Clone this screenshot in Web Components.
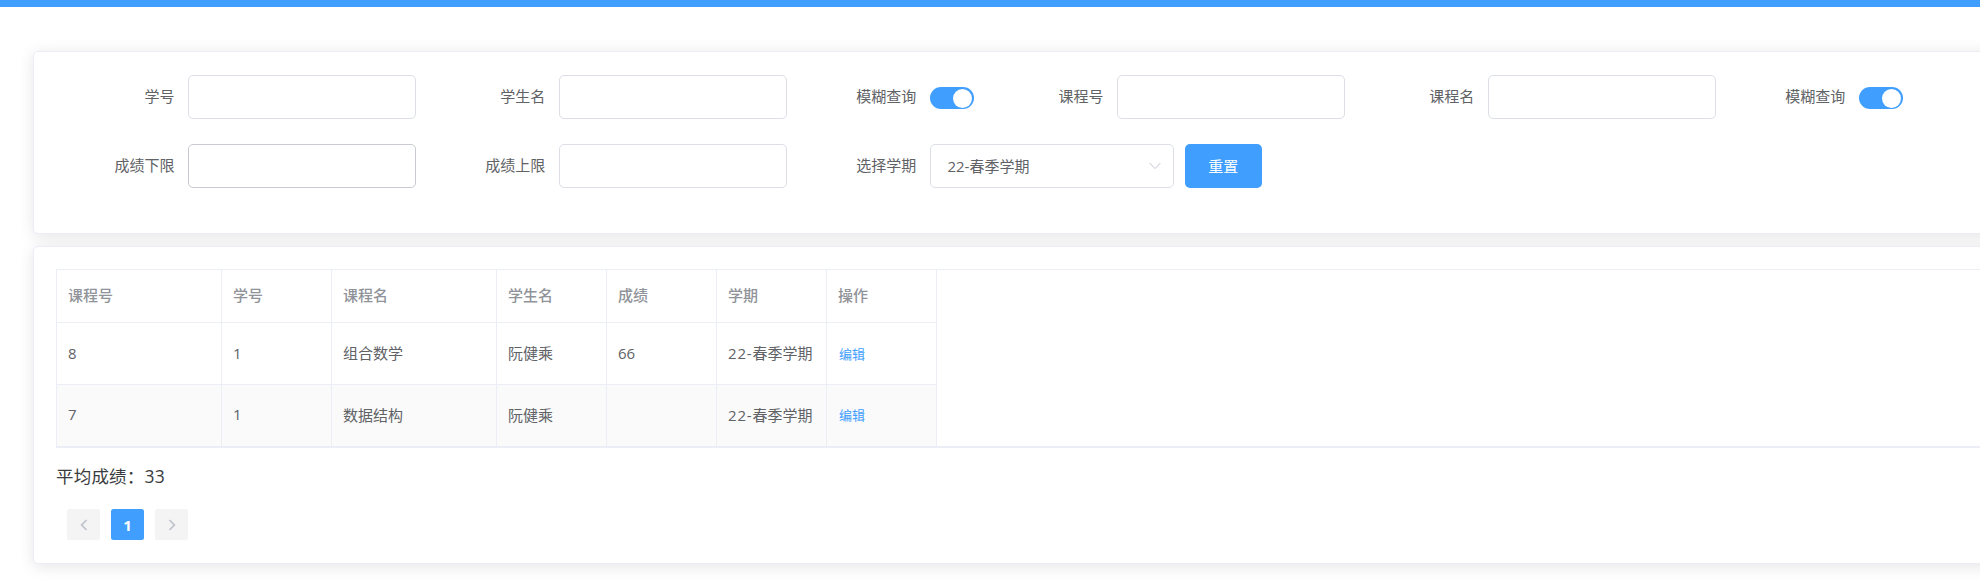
<!DOCTYPE html>
<html lang="zh-CN">
<head>
<meta charset="utf-8">
<title>成绩管理</title>
<style>
html,body{margin:0;padding:0;background:#fff;overflow:hidden;height:100%;}
body{font-family:"Open Sans","Noto Sans CJK SC",sans-serif;font-size:15px;color:#606266;}
</style>
</head>
<body>
<app-shell>
  <ui-card slot="filter" style="--pad:23px 0 45px 29px;--h:183px">
    <form-row>
      <form-item label="学号"><text-field></text-field></form-item>
      <form-item label="学生名"><text-field></text-field></form-item>
      <form-item label="模糊查询" narrow><toggle-switch></toggle-switch></form-item>
      <form-item label="课程号"><text-field></text-field></form-item>
      <form-item label="课程名"><text-field></text-field></form-item>
      <form-item label="模糊查询" narrow><toggle-switch></toggle-switch></form-item>
    </form-row>
    <form-row>
      <form-item label="成绩下限"><text-field hovered></text-field></form-item>
      <form-item label="成绩上限"><text-field></text-field></form-item>
      <form-item label="选择学期" narrow><select-box value="22-春季学期"></select-box></form-item>
      <ui-button>重置</ui-button>
    </form-row>
  </ui-card>
  <ui-card slot="result" style="--pad:22px 0 23px 22px;--h:318px">
    <score-table></score-table>
    <avg-line>平均成绩：33</avg-line>
    <ui-pager></ui-pager>
  </ui-card>
</app-shell>
<script>
const define=(name,css,html,extra)=>{
  customElements.define(name,class extends HTMLElement{
    constructor(){super();const r=this.attachShadow({mode:'open'});
      r.innerHTML=`<style>${css}</style>${typeof html==='function'?html(this):html}`;}
    connectedCallback(){
      if(extra)extra(this);
    }
  });
};
define('app-shell',`
  :host{display:block;width:2200px}
  .bar{height:7px;background:#409EFF}
  .main{display:flex;flex-direction:column;gap:12px;padding:44px 0 0 33px}
`,`<div class="bar"></div><div class="main"><slot name="filter"></slot><slot name="result"></slot></div>`);
define('ui-card',`
  :host{display:block;box-sizing:border-box;height:var(--h);background:#fff;border:1px solid #EBEEF5;border-radius:5px;box-shadow:0 2.5px 15px rgba(0,0,0,.1);padding:var(--pad)}
`,`<slot></slot>`);
define('form-row',`
  :host{display:flex;align-items:center;height:44px;margin-bottom:25px}
`,`<slot></slot>`);
customElements.define('form-item',class extends HTMLElement{
  constructor(){super();const r=this.attachShadow({mode:'open'});
    r.innerHTML=`<style>
      :host{display:flex;align-items:center;height:44px;margin-right:18.2px}
      label{box-sizing:border-box;width:125.2px;padding-right:13.7px;text-align:right;color:#606266;font-size:15px;line-height:42px;height:44px;flex:none}
    </style><label></label><slot></slot>`;
  }
  connectedCallback(){this.shadowRoot.querySelector('label').textContent=this.getAttribute('label');
    if(this.hasAttribute('narrow')){this.style.marginRight=this.querySelector('select-box')?'10.8px':'18px';}}
});
define('text-field',`
  :host{display:block;width:227.5px;height:44px;flex:none}
  input{display:block;box-sizing:border-box;width:100%;height:100%;border:1px solid #DCDFE6;border-radius:5px;background:#fff;outline:none;padding:0 18px;font:inherit;color:#606266}
  :host([hovered]) input{border-color:#C8CBD2}
`,`<input type="text">`);
define('toggle-switch',`
  :host{display:block;width:44px;height:22px;flex:none;margin-top:2px}
  .t{position:relative;height:100%;background:#409EFF;border-radius:11px}
  .k{position:absolute;top:1.5px;right:1.5px;width:19px;height:19px;border-radius:50%;background:#fff}
`,`<div class="t"><div class="k"></div></div>`);
customElements.define('select-box',class extends HTMLElement{
  constructor(){super();const r=this.attachShadow({mode:'open'});
    r.innerHTML=`<style>
      :host{display:flex;box-sizing:border-box;align-items:center;justify-content:space-between;width:244px;height:44px;border:1px solid #DCDFE6;border-radius:5px;padding:0 11.5px 0 16.5px;background:#fff;flex:none}
      span{font-size:15px;color:#606266;margin-top:-1px}
      svg{display:block}
    </style><span></span><svg width="12" height="8" viewBox="0 0 12 8"><path d="M.6 1 6 6.6 11.4 1" fill="none" stroke="#C0C4CC" stroke-width="1"/></svg>`;
  }
  connectedCallback(){this.shadowRoot.querySelector('span').textContent=this.getAttribute('value');}
});
define('ui-button',`
  :host{display:flex;align-items:center;justify-content:center;box-sizing:border-box;width:77px;height:44px;padding-bottom:2px;border-radius:5px;background:#409EFF;color:#fff;font-size:15px;flex:none}
`,`<slot></slot>`);
const cols=[165,110,165,110,110,110,110];
const heads=['课程号','学号','课程名','学生名','成绩','学期','操作'];
const term='<span class="d">22-</span>春季学期';
const rows=[['8','1','组合数学','阮健乘','66',term],['7','1','数据结构','阮健乘','',term]];
define('score-table',`
  :host{display:block;border-top:1px solid #EBEEF5;border-left:1px solid #EBEEF5;border-bottom:2px solid #EBEEF5;height:176px;box-sizing:content-box}
  table{border-collapse:separate;border-spacing:0;table-layout:fixed;width:${cols.reduce((a,b)=>a+b)}px}
  th,td{box-sizing:border-box;padding:0 0 2px 11px;border-right:1px solid #EBEEF5;border-bottom:1px solid #EBEEF5;text-align:left;font-size:15px;white-space:nowrap}
  th{height:53px;color:#909399;font-weight:500;padding-bottom:3px}
  td{height:62px;color:#606266}
  tr:last-child td{border-bottom:0;background:#FAFAFA;height:61px;padding-bottom:3px}
  a{color:#409EFF;font-size:13px;padding-left:1px;text-decoration:none}
  .d{letter-spacing:.8px}
`,`<table><colgroup>${cols.map(c=>`<col style="width:${c}px">`).join('')}</colgroup>
<thead><tr>${heads.map(h=>`<th>${h}</th>`).join('')}</tr></thead>
<tbody>${rows.map(r=>`<tr>${r.map(c=>`<td>${c}</td>`).join('')}<td><a href="#">编辑</a></td></tr>`).join('')}</tbody></table>`);
define('avg-line',`
  :host{display:block;height:61px;line-height:57px;font-size:17.5px;letter-spacing:.2px;color:#3a3c40}
`,`<slot></slot>`);
define('ui-pager',`
  :host{display:flex;gap:11px;padding-left:11px}
  .p{display:flex;align-items:center;justify-content:center;width:33px;height:31px;border-radius:2.5px;background:#F4F4F5;font-size:15px;font-weight:700;color:#fff}
  .on{background:#409EFF}
`,`<div class="p"><svg width="8" height="12" viewBox="0 0 8 12"><path d="M6.5 1 1.7 6l4.8 5" fill="none" stroke="#C0C4CC" stroke-width="1.8"/></svg></div><div class="p on">1</div><div class="p"><svg width="8" height="12" viewBox="0 0 8 12"><path d="M1.5 1 6.3 6l-4.8 5" fill="none" stroke="#C0C4CC" stroke-width="1.8"/></svg></div>`);
</script>
</body>
</html>
